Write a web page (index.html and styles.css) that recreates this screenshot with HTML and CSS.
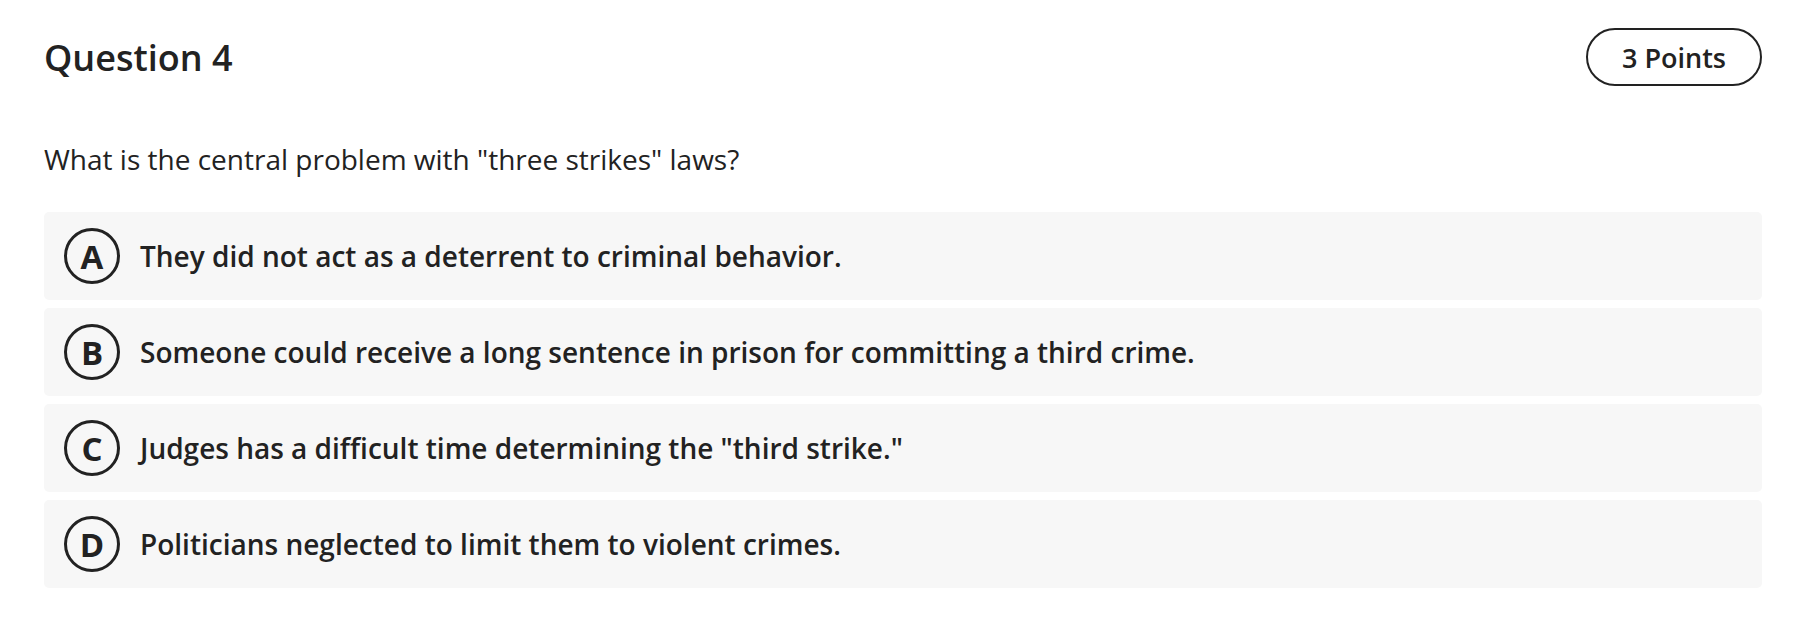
FILE: index.html
```html
<!DOCTYPE html>
<html>
<head>
    <title>Question 4</title>
    <link rel="stylesheet" href="styles.css">
</head>
<body>
    <div class="question">
        <div class="question-head">
            <h2>Question 4</h2>
            <span class="points">3 Points</span>
        </div>
        <p class="prompt">What is the central problem with "three strikes" laws?</p>
        <ul class="choices">
            <li class="choice"><span class="letter">A</span><span class="answer">They did not act as a deterrent to criminal behavior.</span></li>
            <li class="choice"><span class="letter">B</span><span class="answer">Someone could receive a long sentence in prison for committing a third crime.</span></li>
            <li class="choice"><span class="letter">C</span><span class="answer">Judges has a difficult time determining the "third strike."</span></li>
            <li class="choice"><span class="letter">D</span><span class="answer">Politicians neglected to limit them to violent crimes.</span></li>
        </ul>
    </div>
</body>
</html>
```

FILE: styles.css
```css
body {
    font-family: "Open Sans", "Noto Sans", Arial, sans-serif;
    margin: 0;
    padding: 0;
    background: #ffffff;
    color: #222222;
}
.question {
    padding: 28px 38px 0 44px;
}
.question-head {
    display: flex;
    justify-content: space-between;
    align-items: center;
}
h2 {
    margin: 0;
    font-size: 36px;
    font-weight: 600;
    line-height: normal;
}
.points {
    box-sizing: border-box;
    height: 58px;
    display: flex;
    align-items: center;
    padding: 0 34px;
    border: 2px solid #222;
    border-radius: 29px;
    font-size: 27px;
    font-weight: 600;
}
.prompt {
    margin: 54px 0 34px;
    font-size: 28px;
    line-height: normal;
}
.choices {
    list-style: none;
    margin: 0;
    padding: 0;
    display: flex;
    flex-direction: column;
    gap: 8px;
}
.choice {
    box-sizing: border-box;
    height: 88px;
    display: flex;
    align-items: center;
    gap: 20px;
    padding: 0 20px;
    background: #f7f7f7;
    border-radius: 5px;
}
.letter {
    box-sizing: border-box;
    width: 56px;
    height: 56px;
    flex: none;
    display: flex;
    align-items: center;
    justify-content: center;
    border: 3.5px solid #222;
    border-radius: 50%;
    font-size: 33px;
    font-weight: 700;
}
.answer {
    font-size: 28px;
    font-weight: 600;
}
```
